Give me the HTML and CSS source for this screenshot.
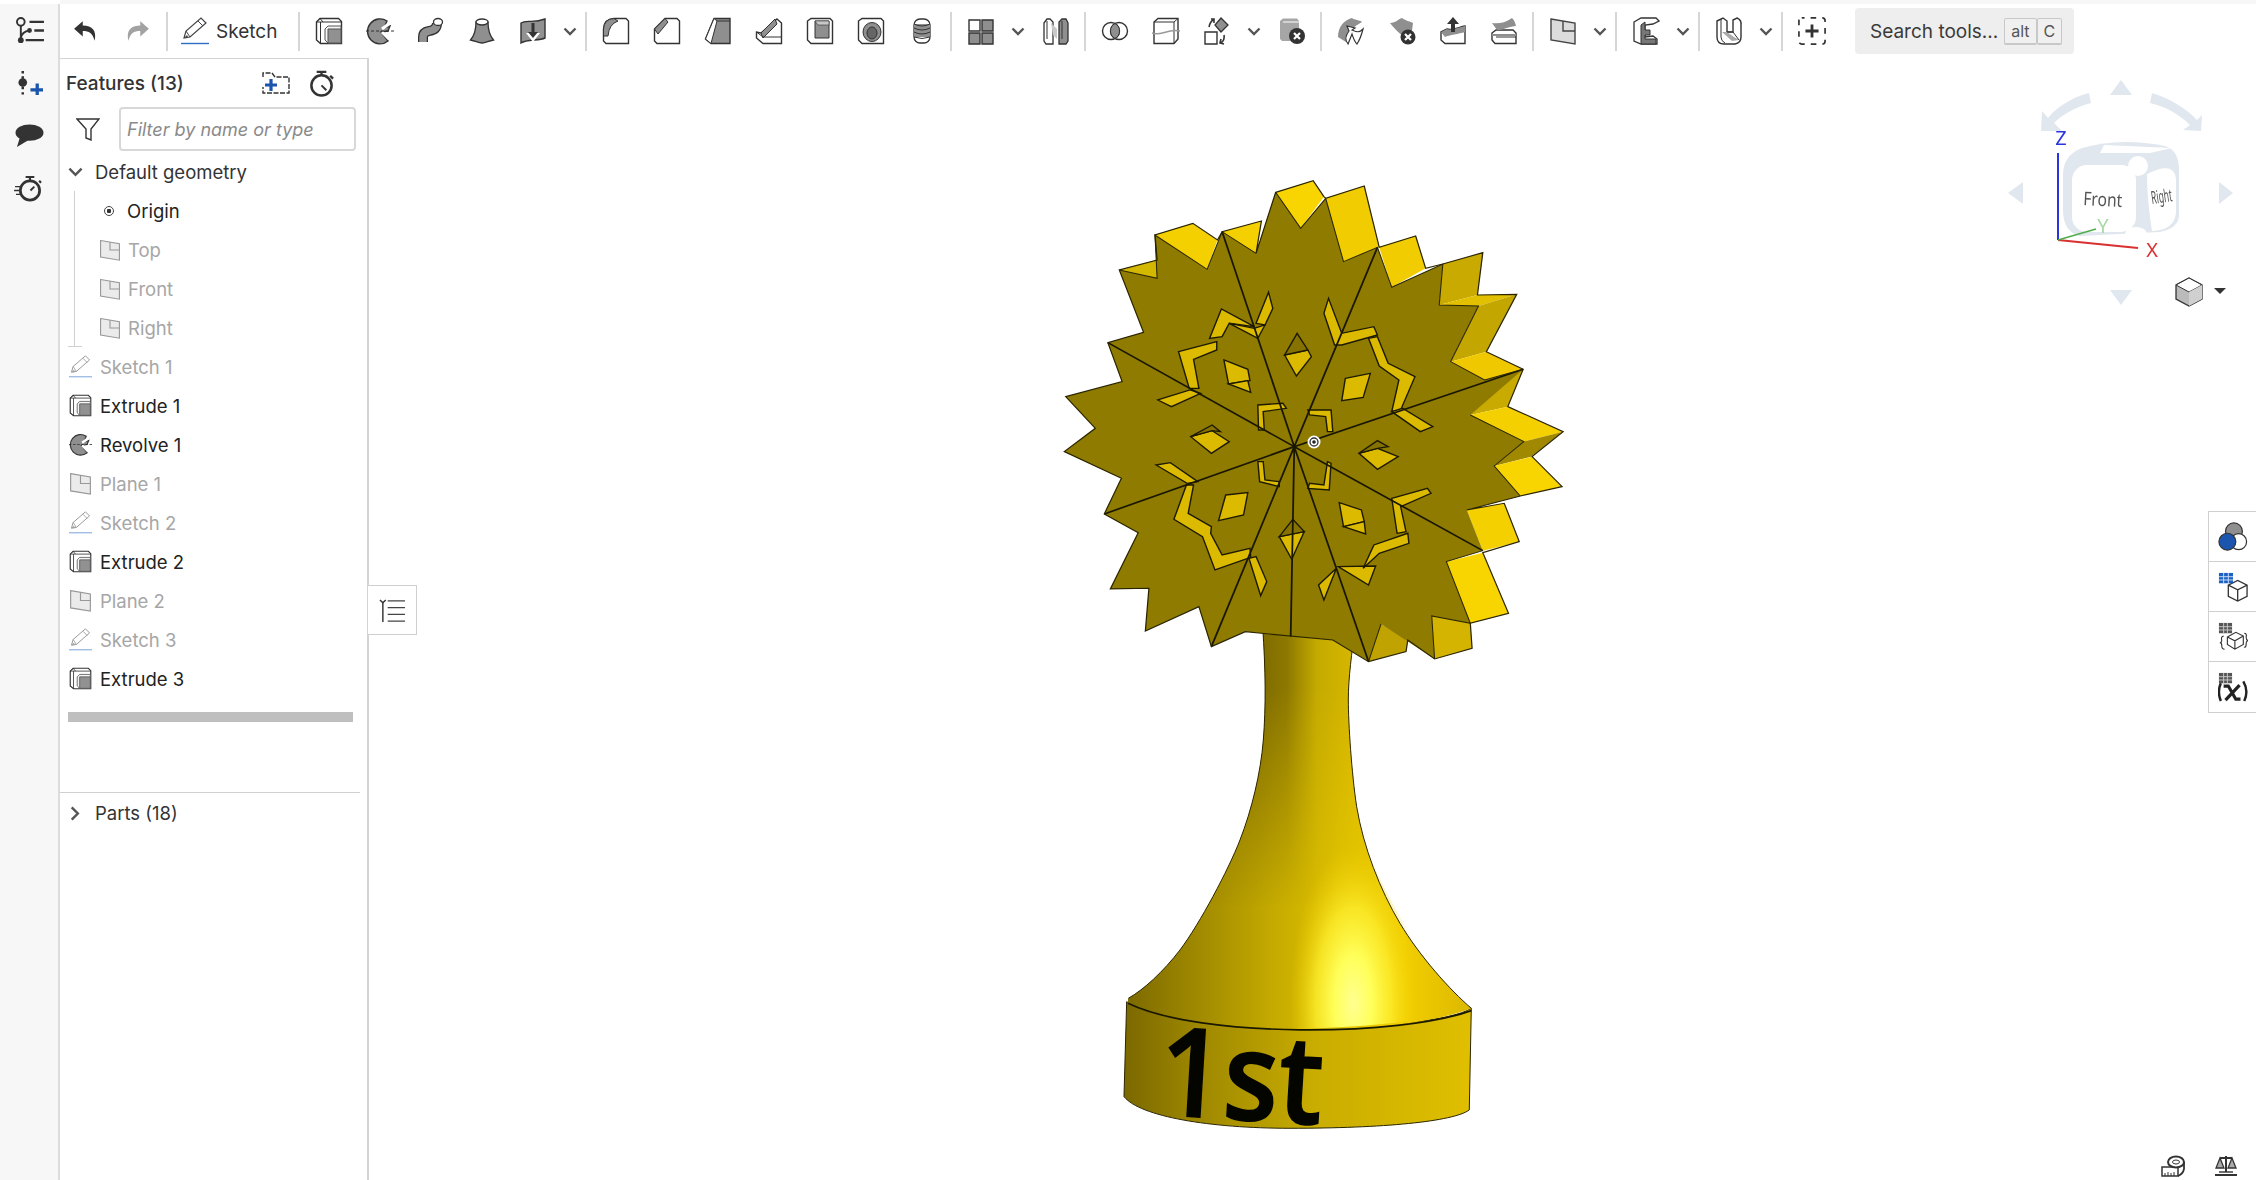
FILE: index.html

```html
<!DOCTYPE html>
<html lang="en">
<head>
  <meta charset="UTF-8" />
  <title>Part Studio - Features</title>
  <link rel="stylesheet" href="styles.css">
</head>
<body>
  <svg class="defs" aria-hidden="true">
    <defs>
      <symbol id="i-extrude" viewBox="0 0 28 28"><path d="M1.500 5 5 1.500H23.500L26.500 4.500V26.500H5.500L1.500 23Z" fill="#fff" stroke="#333" stroke-width="1.400"/><path d="M5.500 26.500V5H26.500M1.500 5 5.500 5M5 1.500 8 5" fill="none" stroke="#333"/><path d="M10 12 13 9H26V26H13L10 23Z" fill="#f4f4f4" stroke="#555"/><path d="M13 12H26V26H13Z" fill="#919191" stroke="#555"/></symbol>
      <symbol id="i-revolve" viewBox="0 0 28 28"><path d="M21 4A12.500 12.500 0 1 0 22 24L15 15 22 14 24 9 18 11Z" fill="#8f8f8f" stroke="#333" stroke-width="1.400"/><path d="M24 6 16 12M23 22 16 15" stroke="#fff" stroke-width="3"/><path d="M0 14H28" stroke="#333" stroke-dasharray="3 2"/></symbol>
      <symbol id="i-sweep" viewBox="0 0 28 28"><path d="M6 25V20Q6 15 12 14 20 13 20 6" fill="none" stroke="#333" stroke-width="10"/><path d="M6 25V20Q6 15 12 14 20 13 20 6" fill="none" stroke="#919191" stroke-width="7.500"/><ellipse cx="21" cy="5" rx="4.500" ry="3.500" fill="#fff" stroke="#333" stroke-width="1.300"/></symbol>
      <symbol id="i-loft" viewBox="0 0 28 28"><path d="M8 5C8 14 6 19 2.500 23 8 24 10 26 14 26 18 26 20 24 25.500 23 22 19 20 14 20 5Z" fill="#8f8f8f" stroke="#333" stroke-width="1.300"/><ellipse cx="14" cy="5" rx="6" ry="3" fill="#fff" stroke="#333" stroke-width="1.300"/></symbol>
      <symbol id="i-thicken" viewBox="0 0 28 28"><path d="M2 6C8 2 13 7 26 2V21C20 24 8 22 2 26Z" fill="#919191" stroke="#333" stroke-width="1.400"/><path d="M7 16 14 25 21 16Z" fill="#fff"/><path d="M12.500 6H15.500V15H19L14 21 9 15H12.500Z" fill="#333"/></symbol>
      <symbol id="i-fillet" viewBox="0 0 28 28"><path d="M1.500 12Q2 2 12 1.500H24L26.500 4V26.500H4L1.500 24Z" fill="#fff" stroke="#333" stroke-width="1.400"/><path d="M1.500 19V12Q2 2 12 1.500L16 4Q7 7 6 19Z" fill="#8f8f8f" stroke="#333"/></symbol>
      <symbol id="i-chamfer" viewBox="0 0 28 28"><path d="M1.500 12 12 1.500H24L26.500 4V26.500H4L1.500 24Z" fill="#fff" stroke="#333" stroke-width="1.400"/><path d="M1.500 12 12 1.500 15 5 5 17Z" fill="#8f8f8f" stroke="#333"/></symbol>
      <symbol id="i-draft" viewBox="0 0 28 28"><path d="M10 1.500H26V26.500H7L1.500 22Z" fill="#8f8f8f" stroke="#333" stroke-width="1.400"/><path d="M1.500 22 10 1.500 13 4 7 26.500Z" fill="#fff" stroke="#333"/><path d="M13 4H26" stroke="#333"/></symbol>
      <symbol id="i-rib" viewBox="0 0 28 28"><path d="M22 2 26.500 6V26.500H8L1.500 21V15L6 16Z" fill="#fff" stroke="#333" stroke-width="1.400"/><path d="M6 16 20 2 22 7 8 21Z" fill="#8f8f8f" stroke="#333"/><path d="M1.500 15 8 20H26" fill="none" stroke="#333"/></symbol>
      <symbol id="i-shell" viewBox="0 0 28 28"><path d="M1.500 4 5 1.500H24L26.500 4V26.500H5L1.500 23Z" fill="#fff" stroke="#333" stroke-width="1.400"/><path d="M9 4V21H23V4Z" fill="#8f8f8f" stroke="#333"/><path d="M9 4H23L23 8H12L9 4Z" fill="#c8c8c8" stroke="#333" stroke-width=".6"/></symbol>
      <symbol id="i-hole" viewBox="0 0 28 28"><path d="M1.500 4 5 1.500H24L26.500 4V26.500H5L1.500 23Z" fill="#fff" stroke="#333" stroke-width="1.400"/><ellipse cx="15" cy="15" rx="9" ry="9.500" fill="#8f8f8f" stroke="#333"/><ellipse cx="15" cy="16" rx="5" ry="6" fill="#666" stroke="#333"/></symbol>
      <symbol id="i-thread" viewBox="0 0 28 28"><rect x="6" y="2" width="16" height="24" rx="6" fill="#fff" stroke="#333" stroke-width="1.300"/><path d="M6 7H22V20H6Z" fill="#8f8f8f"/><path d="M6 7Q14 11 22 7M6 11Q14 15 22 11M6 15Q14 19 22 15M6 20Q14 23 22 20" fill="none" stroke="#333"/></symbol>
      <symbol id="i-pattern" viewBox="0 0 28 28"><path d="M2 3H13V14H2Z" fill="#fff" stroke="#333" stroke-width="1.400"/><path d="M15 3H26V14H15ZM2 16H13V27H2ZM15 16H26V27H15Z" fill="#8f8f8f" stroke="#333" stroke-width="1.400"/></symbol>
      <symbol id="i-mirror" viewBox="0 0 28 28"><path d="M2 6 5 2H8L11 5V27H4L2 24Z" fill="#fff" stroke="#333" stroke-width="1.300"/><path d="M26 6 24 2H20L17 5V27H24L26 24Z" fill="#8f8f8f" stroke="#333" stroke-width="1.300"/><path d="M9 6 15 12V22L11 18Z" fill="#c8c8c8"/><path d="M5 4V22M20 4V22" stroke="#333"/></symbol>
      <symbol id="i-boolean" viewBox="0 0 28 28"><circle cx="10" cy="14" r="8.500" fill="#fff" stroke="#333" stroke-width="1.400"/><circle cx="18" cy="14" r="8.500" fill="none" stroke="#333" stroke-width="1.400"/><path d="M14 6.500A8.500 8.500 0 0 1 14 21.500 8.500 8.500 0 0 1 14 6.500Z" fill="#8f8f8f" stroke="#333"/></symbol>
      <symbol id="i-split" viewBox="0 0 28 28"><path d="M2 5 6 1.500H26V22L22 26.500H2Z" fill="#fff" stroke="#333" stroke-width="1.400"/><path d="M2 5H22V26.500M22 5 26 1.500" fill="none" stroke="#333"/><path d="M0 16C8 20 16 11 28 14" fill="none" stroke="#999" stroke-width="1.500"/></symbol>
      <symbol id="i-transform" viewBox="0 0 28 28"><path d="M18 1 25 8 18 15 12 8Z" fill="#8f8f8f" stroke="#333" stroke-width="1.300"/><path d="M2 15H14V27H2Z" fill="#fff" stroke="#333" stroke-width="1.400"/><path d="M6 10Q7 5 10 3M8 2 11 2 11 6M21 18Q22 23 18 26M18 22 17 26 21 27" fill="none" stroke="#333" stroke-width="1.600"/></symbol>
      <symbol id="i-delpart" viewBox="0 0 28 28"><path d="M2 4 5 1.500H19L21 4V24H4L2 22Z" fill="#a6a6a6"/><path d="M5 5H21" stroke="#fff"/><circle cx="19" cy="19" r="8" fill="#333"/><path d="M16 16 22 22M22 16 16 22" stroke="#fff" stroke-width="2.200"/></symbol>
      <symbol id="i-modify" viewBox="0 0 28 28"><path d="M1 20C1 10 7 3 15 1 17 3 23 3 25 5 19 8 16 12 12 13L9 25Z" fill="#8f8f8f"/><path d="M12 14 10 9 18 11 15 13C20 15 22 16 26 12 24 20 22 24 20 27 17 24 16 20 15 17L11 27C7 22 9 18 12 14Z" fill="#fff" stroke="#333" stroke-width="1.200"/></symbol>
      <symbol id="i-delface" viewBox="0 0 28 28"><path d="M2 6C8 6 10 2 14 1 18 4 21 4 25 6 24 13 24 18 20 24 14 18 8 14 2 6Z" fill="#8f8f8f"/><circle cx="20" cy="20" r="7.500" fill="#333"/><path d="M17 17 23 23M23 17 17 23" stroke="#fff" stroke-width="2.200"/></symbol>
      <symbol id="i-moveface" viewBox="0 0 28 28"><path d="M2 15 8 12C14 14 20 10 26 9V26.500H6L2 23Z" fill="#fff" stroke="#333" stroke-width="1.400"/><path d="M2 15 8 12C14 14 20 10 26 9V15C20 17 10 18 6 20Z" fill="#8f8f8f"/><path d="M12 15V7H8L14 0 20 7H16V15Z" fill="#333"/></symbol>
      <symbol id="i-replace" viewBox="0 0 28 28"><path d="M2 16 6 13H23L26 16V26.500H5L2 23Z" fill="#fff" stroke="#333" stroke-width="1.400"/><path d="M2 18H26" stroke="#8f8f8f" stroke-width="2"/><path d="M6 20H26" stroke="#333"/><path d="M2 6C8 7 15 6 22 1 24 3 25 5 26 9 20 9 11 14 7 13Z" fill="#8f8f8f"/></symbol>
      <symbol id="i-plane" viewBox="0 0 28 28"><path d="M2 2 26 6V27L2 23Z" fill="#dcdcdc" stroke="#444" stroke-width="1.400"/><path d="M14 4V14H26" fill="none" stroke="#444" stroke-width="1.400"/></symbol>
      <symbol id="i-connector" viewBox="0 0 28 28"><path d="M2 5 9 1H24L27 4 21 7 13 8V20L21 19 25 22V27H9L2 24Z" fill="#fff" stroke="#333" stroke-width="1.300"/><path d="M9 8V27H24V22H13V18H18V13H13V5Z" fill="#777" stroke="#333"/></symbol>
      <symbol id="i-sheet" viewBox="0 0 28 28"><path d="M2 4 8 1 12 4V15H18V3L22 1Q27 3 26 9V20Q26 26 20 27H9Q2 27 2 20Z" fill="#fff" stroke="#333" stroke-width="1.400"/><path d="M7 15 12 15 19 20 24 23 17 24Z" fill="#aaa"/><path d="M6 2V20Q6 24 10 26M12 15H18L24 23" fill="none" stroke="#333"/></symbol>
      <symbol id="i-custom" viewBox="0 0 30 30"><rect x="1" y="1" width="28" height="28" rx="3" fill="none" stroke="#333" stroke-width="1.800" stroke-dasharray="6 6.500" stroke-dashoffset="3"/><path d="M15 8V22M8 15H22" stroke="#333" stroke-width="3"/></symbol>
      <symbol id="i-pencil" viewBox="0 0 28 28"><path d="M3 21 5 14 20 1 25 6 9 20Z" fill="#fff" stroke="#444" stroke-width="1.200"/><path d="M5 14 9 20M17 4 22 9" fill="none" stroke="#444"/><path d="M3 21 6 18 7 20Z" fill="#444"/><path d="M0 26.500H28" stroke="#2f6ec4" stroke-width="1.400"/></symbol>
      <symbol id="i-watch" viewBox="0 0 28 28"><path d="M9 2H19M14 2V6M23 6 26 9" stroke="#333" stroke-width="2.400" fill="none"/><circle cx="14" cy="16" r="10.500" fill="none" stroke="#333" stroke-width="2.600"/><path d="M14 16 19 21" stroke="#333" stroke-width="2"/></symbol>
    </defs>
  </svg>

  <div class="app">
    <nav class="rail">
      <svg class="rail-icon" viewBox="0 0 32 28"><circle cx="7" cy="5" r="4" fill="none" stroke="#333" stroke-width="2"/><path d="M7 9V24M7 22Q8 15 16 14" fill="none" stroke="#333" stroke-width="2"/><circle cx="7" cy="24" r="3" fill="#333"/><circle cx="16" cy="14" r="2.500" fill="#333"/><path d="M16 5H31M21 14H31M12 24H31" stroke="#333" stroke-width="2.400"/></svg>
      <svg class="rail-icon" viewBox="0 0 32 28"><path d="M9 1V26" stroke="#333" stroke-width="2.600" stroke-dasharray="2.500 3"/><circle cx="9" cy="13" r="4.500" fill="#333"/><path d="M24 14V26M17 20.500H30" stroke="#1b55ad" stroke-width="3.400"/></svg>
      <svg class="rail-icon" viewBox="0 0 32 28"><ellipse cx="16" cy="10" rx="14.500" ry="8.500" fill="#333"/><path d="M6 15 3 25 16 17Z" fill="#333"/></svg>
      <svg class="rail-icon" viewBox="0 0 32 28"><path d="M12 1H21M16.500 1V5M26 5 28 7" stroke="#333" stroke-width="2.200" fill="none"/><circle cx="16.500" cy="15" r="10" fill="none" stroke="#333" stroke-width="2.800"/><path d="M17 15 21 11" stroke="#333" stroke-width="2"/><path d="M1 11H7M0 15H6M2 19H7" stroke="#333" stroke-width="1.400"/></svg>
    </nav>

    <div class="main">
      <div class="toolbar">
        <button class="tool undo"><svg viewBox="0 0 24 24"><path d="M9 3 1 10 9 17V12C15 12 18 14 20 21 22 12 18 7 9 7Z" fill="#333"/></svg></button>
        <button class="tool undo off"><svg viewBox="0 0 24 24"><path d="M15 3 23 10 15 17V12C9 12 6 14 4 21 2 12 6 7 15 7Z" fill="#333"/></svg></button>
        <span class="sep"></span>
        <button class="tool sketch"><svg class="ic"><use href="#i-pencil"/></svg><span>Sketch</span></button>
        <span class="sep"></span>
        <button class="tool"><svg class="ic"><use href="#i-extrude"/></svg></button>
        <button class="tool"><svg class="ic"><use href="#i-revolve"/></svg></button>
        <button class="tool"><svg class="ic"><use href="#i-sweep"/></svg></button>
        <button class="tool"><svg class="ic"><use href="#i-loft"/></svg></button>
        <button class="tool"><svg class="ic"><use href="#i-thicken"/></svg></button>
        <button class="chev"><svg viewBox="0 0 14 9"><path d="M1.500 1.500 7 7 12.500 1.500" /></svg></button>
        <span class="sep"></span>
        <button class="tool"><svg class="ic"><use href="#i-fillet"/></svg></button>
        <button class="tool"><svg class="ic"><use href="#i-chamfer"/></svg></button>
        <button class="tool"><svg class="ic"><use href="#i-draft"/></svg></button>
        <button class="tool"><svg class="ic"><use href="#i-rib"/></svg></button>
        <button class="tool"><svg class="ic"><use href="#i-shell"/></svg></button>
        <button class="tool"><svg class="ic"><use href="#i-hole"/></svg></button>
        <button class="tool"><svg class="ic"><use href="#i-thread"/></svg></button>
        <span class="sep"></span>
        <button class="tool"><svg class="ic"><use href="#i-pattern"/></svg></button>
        <button class="chev"><svg viewBox="0 0 14 9"><path d="M1.500 1.500 7 7 12.500 1.500" /></svg></button>
        <button class="tool"><svg class="ic"><use href="#i-mirror"/></svg></button>
        <span class="sep"></span>
        <button class="tool"><svg class="ic"><use href="#i-boolean"/></svg></button>
        <button class="tool"><svg class="ic"><use href="#i-split"/></svg></button>
        <button class="tool"><svg class="ic"><use href="#i-transform"/></svg></button>
        <button class="chev"><svg viewBox="0 0 14 9"><path d="M1.500 1.500 7 7 12.500 1.500" /></svg></button>
        <button class="tool"><svg class="ic"><use href="#i-delpart"/></svg></button>
        <span class="sep"></span>
        <button class="tool"><svg class="ic"><use href="#i-modify"/></svg></button>
        <button class="tool"><svg class="ic"><use href="#i-delface"/></svg></button>
        <button class="tool"><svg class="ic"><use href="#i-moveface"/></svg></button>
        <button class="tool"><svg class="ic"><use href="#i-replace"/></svg></button>
        <span class="sep"></span>
        <button class="tool"><svg class="ic"><use href="#i-plane"/></svg></button>
        <button class="chev"><svg viewBox="0 0 14 9"><path d="M1.500 1.500 7 7 12.500 1.500" /></svg></button>
        <span class="sep"></span>
        <button class="tool"><svg class="ic"><use href="#i-connector"/></svg></button>
        <button class="chev"><svg viewBox="0 0 14 9"><path d="M1.500 1.500 7 7 12.500 1.500" /></svg></button>
        <span class="sep"></span>
        <button class="tool"><svg class="ic"><use href="#i-sheet"/></svg></button>
        <button class="chev"><svg viewBox="0 0 14 9"><path d="M1.500 1.500 7 7 12.500 1.500" /></svg></button>
        <span class="sep"></span>
        <button class="tool"><svg class="ic"><use href="#i-custom"/></svg></button>
        <div class="search">
          <span>Search tools...</span>
          <kbd>alt</kbd><kbd>C</kbd>
        </div>
      </div>

      <div class="workspace">
        <aside class="panel">
          <div class="panel-head">
            <span class="panel-title">Features (13)</span>
            <svg class="head-folder" viewBox="0 0 28 22"><path d="M1 5V1H10L13 5H27V21H1V15" fill="none" stroke="#333" stroke-width="1.400" stroke-dasharray="5 1.500"/><path d="M9 7V19M3 13H15" stroke="#1b55ad" stroke-width="3.200"/></svg>
            <svg class="head-watch"><use href="#i-watch"/></svg>
          </div>
          <div class="filter-row">
            <svg class="funnel" viewBox="0 0 24 24"><path d="M1 2H23L15 12V23L10 21V12Z" fill="none" stroke="#333" stroke-width="1.400"/></svg>
            <div class="filter-input">Filter by name or type</div>
          </div>

          <div class="row head-row"><svg class="arrow" viewBox="0 0 16 10"><path d="M1.500 1.500 8 8 14.500 1.500"/></svg><span>Default geometry</span></div>
          <div class="group">
            <div class="row sub"><span class="origin"></span><span>Origin</span></div>
            <div class="row sub off"><svg class="ic-sub"><use href="#i-plane"/></svg><span>Top</span></div>
            <div class="row sub off"><svg class="ic-sub"><use href="#i-plane"/></svg><span>Front</span></div>
            <div class="row sub off"><svg class="ic-sub"><use href="#i-plane"/></svg><span>Right</span></div>
          </div>
          <div class="row off"><svg class="ic-row"><use href="#i-pencil"/></svg><span>Sketch 1</span></div>
          <div class="row on"><svg class="ic-row"><use href="#i-extrude"/></svg><span>Extrude 1</span></div>
          <div class="row on"><svg class="ic-row"><use href="#i-revolve"/></svg><span>Revolve 1</span></div>
          <div class="row off"><svg class="ic-row"><use href="#i-plane"/></svg><span>Plane 1</span></div>
          <div class="row off"><svg class="ic-row"><use href="#i-pencil"/></svg><span>Sketch 2</span></div>
          <div class="row on"><svg class="ic-row"><use href="#i-extrude"/></svg><span>Extrude 2</span></div>
          <div class="row off"><svg class="ic-row"><use href="#i-plane"/></svg><span>Plane 2</span></div>
          <div class="row off"><svg class="ic-row"><use href="#i-pencil"/></svg><span>Sketch 3</span></div>
          <div class="row on"><svg class="ic-row"><use href="#i-extrude"/></svg><span>Extrude 3</span></div>

          <div class="rollback"></div>
          <div class="parts"><svg class="arrow-r" viewBox="0 0 10 16"><path d="M1.500 1.500 8 8 1.500 14.500"/></svg><span>Parts (18)</span></div>
        </aside>

        <div class="canvas">
          <svg class="scene" viewBox="369 58 1887 1122">
            <defs>
              <linearGradient id="stem" x1="85" x2="1114" y1="0" y2="0" gradientUnits="userSpaceOnUse">
                <stop offset="0" stop-color="#7d6a00"/>
                <stop offset=".18" stop-color="#9c8600"/>
                <stop offset=".42" stop-color="#c4aa00"/>
                <stop offset=".62" stop-color="#e2c400"/>
                <stop offset=".8" stop-color="#f2cf00"/>
                <stop offset="1" stop-color="#dcb800"/>
              </linearGradient>
              <linearGradient id="neck" x1="470" x2="770" y1="0" y2="0" gradientUnits="userSpaceOnUse">
                <stop offset="0" stop-color="#7d6a00"/>
                <stop offset=".3" stop-color="#8d7800"/>
                <stop offset=".6" stop-color="#c4aa00"/>
                <stop offset="1" stop-color="#d8b800"/>
              </linearGradient>
              <linearGradient id="fade-grad" x1="0" x2="0" y1="150" y2="800" gradientUnits="userSpaceOnUse">
                <stop offset="0" stop-color="#fff"/>
                <stop offset="1" stop-color="#000"/>
              </linearGradient>
              <mask id="neck-fade" maskUnits="userSpaceOnUse" x="0" y="-100" width="1200" height="1400">
                <rect x="0" y="-100" width="1200" height="1400" fill="url(#fade-grad)"/>
              </mask>
              <radialGradient id="shine" cx="760" cy="1090" r="190" gradientUnits="userSpaceOnUse" gradientTransform="translate(760 1090) scale(1 2.500) translate(-760 -1090)">
                <stop offset="0" stop-color="#ffff90"/>
                <stop offset=".3" stop-color="#ffff5a"/>
                <stop offset=".6" stop-color="#fff030" stop-opacity=".75"/>
                <stop offset="1" stop-color="#f2cf00" stop-opacity="0"/>
              </radialGradient>
              <linearGradient id="base" x1="0" x2="1" y1="0" y2="0">
                <stop offset="0" stop-color="#7b6800"/>
                <stop offset=".2" stop-color="#9c8600"/>
                <stop offset=".55" stop-color="#c9ad00"/>
                <stop offset="1" stop-color="#e0bf00"/>
              </linearGradient>
              <filter id="soft"><feGaussianBlur stdDeviation=".5"/></filter>
            </defs>

            <g transform="translate(1100 640) scale(.3333)">
              <path class="edge" fill="url(#base)" d="M80 1085 72 1370C120 1430 330 1465 570 1465 850 1465 1060 1445 1108 1410L1114 1105C1000 1180 200 1190 80 1085Z"/>
              <path fill="url(#stem)" d="M488 -40C497 90 498 200 490 300 482 400 455 510 420 600 385 690 300 850 240 930 190 995 130 1050 85 1075 82 1085 85 1092 90 1098 300 1200 900 1190 1114 1105 1050 1050 960 950 900 850 840 750 790 620 770 500 755 400 745 250 745 180 745 110 756 40 765 -40Z"/>
              <path fill="url(#neck)" mask="url(#neck-fade)" d="M488 -40C497 90 498 200 490 300 482 400 455 510 420 600 385 690 340 780 300 850H860C840 750 790 620 770 500 755 400 745 250 745 180 745 110 756 40 765 -40Z"/>
              <path fill="url(#shine)" d="M400 1170 470 640 790 600C850 760 960 950 1100 1105 1000 1150 700 1170 400 1170Z"/>
              <path fill="none" stroke="#2a2500" stroke-width="3" d="M488 -40C497 90 498 200 490 300 482 400 455 510 420 600 385 690 300 850 240 930 190 995 130 1050 85 1075M765 -40C756 40 745 110 745 180 745 250 755 400 770 500 790 620 840 750 900 850 960 950 1050 1050 1114 1105"/>
              <path fill="none" stroke="#1a1800" stroke-width="5" d="M84 1090C300 1195 900 1190 1114 1112"/>
              <text class="first" transform="translate(170 1424) rotate(3.500) scale(1.030 1.120)">1st</text>
            </g>

            <g transform="translate(1040 160) scale(.3571 .3333)" class="flower">
              <path fill="#f8d400" d="M660 97 765 62 795 110 730 205Z"/>
              <path fill="#f0cc00" d="M800 115 908 78 950 262 850 305Z"/>
              <path fill="#f0cc00" d="M950 262 1052 228 1080 325 985 382Z"/>
              <path fill="#c8aa00" d="M1128 312 1240 278 1225 405 1118 435Z"/>
              <path fill="#e2c000" d="M1118 435 1225 405 1335 403 1228 438Z"/>
              <path fill="#c4a600" d="M1228 438 1335 403 1250 575 1150 605Z"/>
              <path fill="#f0c800" d="M1150 605 1250 575 1353 628 1245 660Z"/>
              <path fill="#c8aa00" d="M1245 660 1353 628 1310 740 1205 765Z"/>
              <path fill="#f5d000" d="M1205 765 1310 740 1465 815 1355 845Z"/>
              <path fill="#a08800" d="M1355 845 1465 815 1375 890 1272 918Z"/>
              <path fill="#f8d400" d="M1272 918 1378 890 1462 980 1345 1008Z"/>
              <path fill="#f5d000" d="M1195 1050 1300 1030 1342 1145 1240 1172Z"/>
              <path fill="#f8d400" d="M1138 1205 1240 1178 1312 1360 1205 1390Z"/>
              <path fill="#d4b400" d="M1097 1368 1205 1390 1210 1465 1105 1497Z"/>
              <path fill="#c0a200" d="M955 1392 1030 1440 1025 1475 920 1505Z"/>
              <path fill="#d4b800" d="M222 330 328 300 328 355Z"/>
              <path fill="#f5d000" d="M322 225 428 190 497 240 468 328Z"/>
              <path fill="#f5d000" d="M510 215 620 183 605 280Z"/>

              <path fill="#8f7b00" d="M660 97 730 205 800 115 850 305 945 262 985 382 1128 312 1118 435 1228 438 1150 605 1245 660 1353 628 1205 765 1355 845 1272 918 1345 1008 1195 1050 1240 1172 1138 1205 1205 1390 1097 1368 1105 1497 955 1392 920 1505 820 1440 620 1420 575 1415 480 1460 445 1340 295 1413 305 1285 197 1287 275 1118 180 1062 228 955 68 875 155 805 72 710 230 665 190 548 290 517 222 330 328 355 322 225 468 328 510 215 605 280Z"/>

              <g class="cuts">
                <path d="M388 575 495 545 495 570 430 598 445 685 418 685Z"/>
                <path d="M475 535 508 447 600 500 530 490 510 530Z"/>
                <path d="M530 490 600 505 630 495 610 535Z"/>
                <path d="M605 490 640 397 652 445 630 495Z"/>
                <path d="M795 460 808 415 822 455 845 520 935 500 945 525 845 555 825 555Z"/>
                <path d="M920 535 945 530 975 610 1050 650 1010 750 985 755 1005 660 950 618Z"/>
                <path d="M985 755 1015 745 1100 800 1065 815Z"/>
                <path d="M330 720 420 690 450 700 368 740Z"/>
                <path d="M325 915 365 908 442 965 412 970Z"/>
                <path d="M410 975 430 975 415 1060 480 1100 478 1120 510 1185 588 1165 590 1192 490 1230 455 1130 375 1078Z"/>
                <path d="M585 1195 605 1190 635 1265 618 1307Z"/>
                <path d="M780 1275 830 1225 795 1320Z"/>
                <path d="M835 1220 940 1218 920 1275Z"/>
                <path d="M905 1225 935 1155 1030 1120 1033 1150 950 1180Z"/>
                <path d="M985 1015 1085 985 1095 1000 1010 1040 1025 1115 1000 1120Z"/>
                <path d="M610 735 680 730 690 745 625 755 628 810 612 810Z"/>
                <path d="M750 750 815 750 820 815 805 815 800 770 755 765Z"/>
                <path d="M610 905 625 905 630 960 670 965 670 980 615 965Z"/>
                <path d="M805 905 815 910 810 990 750 985 755 970 795 975Z"/>
                <path d="M685 585 750 570 760 590 718 648Z"/>
                <path d="M720 520 685 585 750 570Z" class="dim"/>
                <path d="M515 600 582 628 588 662 528 672Z"/>
                <path d="M528 672 582 662 590 697Z"/>
                <path d="M855 655 925 640 905 712 845 722Z"/>
                <path d="M893 880 945 865 1003 890 945 928Z"/>
                <path d="M893 880 945 842 975 860 945 865Z" class="dim"/>
                <path d="M422 830 482 812 530 845 480 880Z"/>
                <path d="M422 830 482 795 505 815 482 812Z" class="dim"/>
                <path d="M838 1028 900 1050 908 1085 850 1100Z"/>
                <path d="M850 1100 908 1085 912 1122Z"/>
                <path d="M520 1005 582 998 570 1065 500 1082Z"/>
                <path d="M670 1130 740 1115 705 1198Z"/>
                <path d="M708 1078 670 1130 740 1115Z" class="dim"/>
              </g>

              <g class="spokes">
                <path d="M510 215 712 860 945 262"/>
                <path d="M1353 628 712 860 1240 1172"/>
                <path d="M712 860 920 1505M712 860 702 1430M712 860 480 1460M712 860 180 1062M712 860 190 548"/>
              </g>
              <path class="outline" d="M660 97 765 62 795 110 800 115 908 78 950 262 1052 228 1080 325 1128 312 1240 278 1225 405 1335 403 1250 575 1353 628 1310 740 1465 815 1378 890 1462 980 1345 1008 1195 1050 1300 1030 1342 1145 1240 1178 1312 1360 1205 1390 1210 1465 1105 1497 1030 1440 1025 1475 920 1505 820 1440 620 1420 575 1415 480 1460 445 1340 295 1413 305 1285 197 1287 275 1118 180 1062 228 955 68 875 155 805 72 710 230 665 190 548 290 517 222 330 328 300 322 225 428 190 497 240 510 215 620 183 605 280 660 97Z"/>
              <path class="inner-line" d="M660 97 730 205 800 115 850 305 945 262 985 382 1128 312 1118 435 1228 438 1150 605 1245 660 1353 628M1205 765 1355 845 1272 918 1345 1008M1240 1172 1138 1205 1205 1390 1097 1368 1105 1497M955 1392 920 1505M222 330 328 355 322 225 468 328 510 215 605 280"/>
            </g>
            <circle cx="1314" cy="442" r="6.500" fill="#fff"/>
            <circle cx="1314" cy="442" r="4" fill="#fff" stroke="#333" stroke-width="1.300"/>
            <circle cx="1314" cy="442" r="1.800" fill="#222"/>

            <!-- view cube -->
            <g class="cube" filter="url(#soft)">
              <path class="cube-ui" d="M2121 80 2132 95H2110ZM2023 182V204L2008 193ZM2219 182 2233 193 2219 204ZM2110 290H2132L2121 305ZM2089 93C2070 98 2056 108 2048 118L2042 111 2041 131 2062 131 2054 123C2062 115 2075 107 2091 103ZM2152 93C2170 98 2188 110 2197 120L2202 115 2201 131 2183 130 2190 125C2180 115 2167 107 2150 103Z"/>
              <path class="cube-ui" d="M2082 148Q2120 137 2165 146 2179 150 2179 170V215Q2179 228 2160 232L2080 236Q2063 232 2063 210V175Q2063 155 2082 148Z"/>
              <rect x="2072" y="165" width="64" height="67" rx="15" fill="#fff"/>
              <path d="M2147 174Q2175 160 2176 180V212Q2175 230 2152 231 2147 200 2147 174Z" fill="#fff"/>
              <circle cx="2138" cy="166" r="10" fill="#fff"/>
              <ellipse cx="2136" cy="234" rx="11" ry="7" fill="#fff"/>
              <path d="M2104 145 2172 148 2150 153H2100Z" fill="#fff"/>
              <path d="M2058 153V240" stroke="#2a35e0" stroke-width="2" fill="none"/>
              <path d="M2058 240 2138 248" stroke="#d93030" stroke-width="2" fill="none"/>
              <path d="M2058 240 2096 229" stroke="#4cae4c" stroke-width="1.500" fill="none"/>
              <text x="2061" y="145" class="axis axis-z" text-anchor="middle">Z</text>
              <text x="2152" y="257" class="axis axis-x" text-anchor="middle">X</text>
              <text x="2103" y="233" class="axis axis-y" text-anchor="middle">Y</text>
              <text class="face-front" transform="translate(2083 205) rotate(3) scale(.92 1.100)">Front</text>
              <text class="face-right" transform="translate(2152 204) rotate(-8) scale(.5 1.050)">Right</text>
            </g>
            <path d="M2189 278 2202 285V299L2189 306 2176 299V285Z" fill="#bbb" stroke="#333" stroke-width="1.300"/>
            <path d="M2176 285 2189 292 2202 285 2189 278Z" fill="#fff" stroke="#333" stroke-width="1"/>
            <path d="M2189 292V306L2202 299V285Z" fill="#d0d0d0"/>
            <path d="M2214 288H2226L2220 294Z" fill="#333"/>
          </svg>

          <button class="panel-tab"><svg viewBox="0 0 28 28"><path d="M1 3 4 6 7 3" fill="none" stroke="#333" stroke-width="1.500"/><path d="M4 6V26" stroke="#333" stroke-width="1.500"/><path d="M9 4H27M9 11H27M9 18H27M9 25H27" stroke="#444" stroke-width="1.400"/></svg></button>

          <div class="dock">
            <button class="dock-btn"><svg viewBox="0 0 32 32"><circle cx="17" cy="10" r="9" fill="#8f8f8f" stroke="#333" stroke-width="1.300"/><circle cx="22" cy="21" r="8.500" fill="#fff" stroke="#333" stroke-width="1.300"/><circle cx="10" cy="21" r="9" fill="#1b55ad" stroke="#333" stroke-width="1.300"/></svg></button>
            <button class="dock-btn"><svg viewBox="0 0 32 32"><path d="M11 14 21 9 31 14V26L21 31 11 26ZM11 14 21 19 31 14M21 19V31" fill="#fff" stroke="#333" stroke-width="1.400"/><path d="M1 1H16V12H1Z" fill="#1b60c4"/><path d="M1 5H16M1 8.500H16M6 1V12M11 1V12" stroke="#cfe0f8"/></svg></button>
            <button class="dock-btn"><svg viewBox="0 0 32 32"><path d="M10 16 19 11 27 15V24L18 29 10 24ZM10 16 18 20 27 15M18 20V29" fill="#fff" stroke="#333" stroke-width="1.200"/><path d="M1 1H15V12H1Z" fill="#555"/><path d="M1 5H15M1 8.500H15M6 1V12M10 1V12" stroke="#ccc"/><path d="M6 15Q3 15 4 20 4 22 2 22 4 22 4 25 4 29 7 29M28 12Q31 12 30 16 30 19 32 20 30 20 30 24 30 27 28 27" fill="none" stroke="#333" stroke-width="1.200"/></svg></button>
            <button class="dock-btn"><svg viewBox="0 0 32 32"><path d="M1 1H15V12H1Z" fill="#555"/><path d="M1 5H15M1 8.500H15M6 1V12M10 1V12" stroke="#ccc"/><path d="M3 12Q-1 21 3 31M27 10Q33 20 28 31" fill="none" stroke="#222" stroke-width="2.600"/><path d="M6 15H11L19 29H24M23 14 8 30" fill="none" stroke="#222" stroke-width="3.400"/></svg></button>
          </div>

          <div class="corner-tools">
            <svg viewBox="0 0 24 22"><path d="M1 12H17V21H1Z" fill="#fff" stroke="#333" stroke-width="1.500"/><path d="M4 18V21M7 17V21M10 18V21M13 17V21" stroke="#333"/><ellipse cx="15" cy="7" rx="8" ry="5.500" fill="#fff" stroke="#333" stroke-width="2"/><ellipse cx="15" cy="7" rx="3.500" ry="2" fill="none" stroke="#333"/><path d="M23 7V14Q22 19 17 21" fill="none" stroke="#333" stroke-width="1.800"/></svg>
            <svg viewBox="0 0 24 22"><path d="M12 1V17M6 3H18M1 20H23" stroke="#333" stroke-width="2"/><path d="M6 3 2 13H10ZM18 3 14 13H22Z" fill="#aaa" stroke="#333" stroke-width="1.300"/><path d="M5 17H19" stroke="#333" stroke-width="1.400"/></svg>
          </div>
        </div>
      </div>
    </div>
  </div>
</body>
</html>
```

FILE: styles.css

```css
* {
  box-sizing: border-box;
}
html, body {
  margin: 0;
  height: 100%;
  background: #fff;
  overflow: hidden;
}
body {
  font-family: Inter, "Noto Sans", sans-serif;
  color: #333;
}
button {
  border: 0;
  padding: 0;
  background: none;
  font: inherit;
  color: inherit;
}
.defs {
  position: absolute;
  width: 0;
  height: 0;
}
.app {
  display: flex;
  height: 1180px;
  width: 2256px;
}

/* left rail */
.rail {
  flex: 0 0 60px;
  margin-top: 4px;
  padding-top: 13px;
  background: #f7f7f7;
  border-right: 2px solid #dcdcdc;
  display: flex;
  flex-direction: column;
  align-items: center;
  gap: 26px;
}
.rail-icon {
  width: 31px;
  height: 27px;
}
.main {
  flex: 1;
  display: flex;
  flex-direction: column;
  min-width: 0;
  border-top: 4px solid #f7f7f7;
}

/* toolbar */
.toolbar {
  height: 54px;
  display: flex;
  align-items: center;
  flex: none;
}
.tool {
  flex: 0 0 51px;
  height: 44px;
  display: flex;
  align-items: center;
  justify-content: center;
}
.tool .ic {
  width: 28px;
  height: 28px;
}
.tool.undo {
  flex-basis: 51.5px;
}
.tool.undo svg {
  width: 26px;
  height: 26px;
}
.tool.off {
  opacity: .45;
}
.tool.sketch {
  flex: 0 0 124px;
  justify-content: flex-start;
  padding-left: 10px;
  gap: 7px;
  font-size: 19px;
}
.chev {
  flex: 0 0 24px;
  height: 44px;
  display: flex;
  align-items: center;
  justify-content: center;
}
.chev svg {
  width: 14px;
  height: 9px;
  fill: none;
  stroke: #555;
  stroke-width: 2.4;
}
.sep {
  flex: 0 0 2px;
  height: 39px;
  margin: 0 3px;
  background: #d6d6d6;
}
.search {
  margin-left: 18px;
  width: 219px;
  height: 46px;
  padding: 0 15px;
  background: #eeeeee;
  border-radius: 4px;
  display: flex;
  align-items: center;
  font-size: 19px;
  color: #3a3a3a;
}
.search span {
  margin-right: 6px;
  white-space: nowrap;
}
.search kbd {
  font-family: inherit;
  font-size: 16px;
  height: 27px;
  padding: 0 6px;
  display: flex;
  align-items: center;
  border: 1px solid #c8c8c8;
  border-bottom-width: 2px;
  border-radius: 2px;
  background: #f0f0f0;
  color: #555;
}
.workspace {
  flex: 1;
  display: flex;
  min-height: 0;
}

/* feature panel */
.panel {
  flex: 0 0 309px;
  border-top: 1px solid #d4d4d4;
  border-right: 2px solid #d4d4d4;
  display: flex;
  flex-direction: column;
}
.panel-head {
  height: 48px;
  padding-left: 6px;
  display: flex;
  align-items: center;
}
.panel-title {
  font-size: 19px;
  font-weight: 500;
}
.head-folder {
  width: 28px;
  height: 22px;
  margin-left: auto;
}
.head-watch {
  width: 27px;
  height: 27px;
  margin: 0 32px 0 18px;
}
.filter-row {
  height: 44px;
  display: flex;
  align-items: center;
  padding-left: 16px;
}
.funnel {
  width: 24px;
  height: 24px;
}
.filter-input {
  margin-left: 19px;
  width: 237px;
  height: 44px;
  padding-left: 6px;
  border: 2px solid #d8d8d8;
  border-radius: 4px;
  display: flex;
  align-items: center;
  font-size: 18px;
  font-style: italic;
  color: #8a8a8a;
}
.row {
  height: 39px;
  flex: none;
  display: flex;
  align-items: center;
  padding-left: 9px;
  gap: 8px;
  font-size: 18.500px;
  color: #222;
}
.row.off {
  color: #a6a6a6;
}
.row.off svg {
  opacity: .55;
}
.ic-row {
  width: 23px;
  height: 23px;
}
.head-row {
  margin-top: 1px;
  padding-left: 8px;
  gap: 12px;
  color: #333;
}
.arrow {
  width: 15px;
  height: 10px;
  fill: none;
  stroke: #555;
  stroke-width: 2.6;
}
.group {
  position: relative;
  margin-left: 14px;
  border-left: 1px solid #d0d0d0;
}
.group::after {
  content: "";
  position: absolute;
  left: -7px;
  bottom: 0;
  width: 14px;
  border-top: 1px solid #d0d0d0;
}
.row.sub {
  padding-left: 24px;
  gap: 7px;
}
.row.sub .ic-sub {
  width: 22px;
  height: 22px;
}
.origin {
  width: 10px;
  height: 10px;
  margin: 0 6px 0 5px;
  border-radius: 50%;
  border: 1px solid #444;
  background: radial-gradient(#333 0 2px, #fff 2.5px);
}
.rollback {
  flex: none;
  height: 10px;
  width: 285px;
  margin: 14px 0 0 8px;
  background: #bfbfbf;
}
.parts {
  flex: none;
  width: 300px;
  height: 41px;
  margin-top: 70px;
  border-top: 1px solid #d0d0d0;
  padding-left: 10px;
  display: flex;
  align-items: center;
  gap: 15px;
  font-size: 18.500px;
}
.arrow-r {
  width: 10px;
  height: 15px;
  fill: none;
  stroke: #555;
  stroke-width: 2.6;
}

/* 3d view */
.canvas {
  flex: 1;
  position: relative;
  min-width: 0;
}
.scene {
  position: absolute;
  left: 0;
  top: 0;
  width: 1887px;
  height: 1122px;
}
.edge {
  stroke: #2a2500;
  stroke-width: 3;
}
.first {
  font-family: "Open Sans", "Noto Sans", sans-serif;
  font-weight: 600;
  font-size: 330px;
  fill: #050500;
  stroke: #050500;
  stroke-width: 4;
}
.cuts path {
  fill: #dcba00;
  stroke: #1d1a00;
  stroke-width: 4;
}
.cuts path.dim {
  fill: #857200;
}
.spokes path {
  fill: none;
  stroke: #1a1700;
  stroke-width: 5;
}
.outline {
  fill: none;
  stroke: #2a2500;
  stroke-width: 3.5;
}
.inner-line {
  fill: none;
  stroke: #2a2500;
  stroke-width: 3;
}
.cube-ui {
  fill: #e1e7ee;
}
.axis {
  font-family: "Noto Sans", sans-serif;
  font-size: 20px;
}
.axis-z {
  fill: #2a35e0;
}
.axis-x {
  fill: #d93030;
}
.axis-y {
  fill: #a8d8a8;
}
.face-front, .face-right {
  font-family: "Noto Sans", sans-serif;
  font-size: 17px;
  fill: #555;
}
.panel-tab {
  position: absolute;
  left: -1px;
  top: 527px;
  width: 49px;
  height: 50px;
  background: #fff;
  border: 1px solid #cfcfcf;
  border-left: 0;
  display: flex;
  align-items: center;
  justify-content: center;
}
.panel-tab svg {
  width: 27px;
  height: 27px;
}
.dock {
  position: absolute;
  right: 0;
  top: 453px;
  width: 48px;
  display: flex;
  flex-direction: column;
  background: #fff;
  border: 1px solid #cfcfcf;
  border-right: 0;
}
.dock-btn {
  height: 50px;
  display: flex;
  align-items: center;
  justify-content: center;
  border-bottom: 1px solid #cfcfcf;
}
.dock-btn:last-child {
  border-bottom: 0;
}
.dock-btn svg {
  width: 30px;
  height: 30px;
}
.corner-tools {
  position: absolute;
  right: 18px;
  bottom: 3px;
  display: flex;
  gap: 29px;
}
.corner-tools svg {
  width: 24px;
  height: 22px;
}
```
